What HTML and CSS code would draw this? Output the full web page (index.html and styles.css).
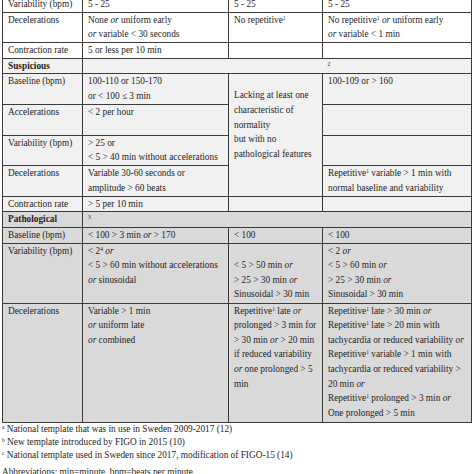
FILE: index.html
```html
<!DOCTYPE html>
<html>
<head>
<meta charset="utf-8">
<link rel="stylesheet" href="styles.css">
</head>
<body>
<div class="page">
<table class="grid">
<colgroup>
<col class="c1"><col class="c2"><col class="c3"><col class="c4">
</colgroup>
<tbody>
<tr class="normal l1">
<td>Variability (bpm)</td><td>5 - 25</td><td>5 - 25</td><td>5 - 25</td>
</tr>
<tr class="normal l2">
<td>Decelerations</td>
<td>None <i>or</i> uniform early<br><i>or</i> variable &lt; 30 seconds</td>
<td>No repetitive<sup>1</sup></td>
<td>No repetitive<sup>1</sup> <i>or</i> uniform early<br><i>or</i> variable &lt; 1 min</td>
</tr>
<tr class="normal l1">
<td>Contraction rate</td><td>5 or less per 10 min</td><td></td><td></td>
</tr>
<tr class="susp l1 head">
<td><b>Suspicious</b></td><td class="nr"></td><td class="nlr"></td><td class="nl"><sup>2</sup></td>
</tr>
<tr class="susp l2">
<td>Baseline (bpm)</td>
<td>100-110 or 150-170<br>or &lt; 100 ≤ 3 min</td>
<td rowspan="4" class="lack">Lacking at least one<br>characteristic of<br>normality<br>but with no<br>pathological features</td>
<td>100-109 or &gt; 160</td>
</tr>
<tr class="susp l2">
<td>Accelerations</td><td>&lt; 2 per hour</td><td></td>
</tr>
<tr class="susp l2">
<td>Variability (bpm)</td>
<td>&gt; 25 or<br>&lt; 5 &gt; 40 min without accelerations</td>
<td></td>
</tr>
<tr class="susp l2">
<td>Decelerations</td>
<td>Variable 30-60 seconds or<br>amplitude &gt; 60 beats</td>
<td>Repetitive<sup>1</sup> variable &gt; 1 min with<br>normal baseline and variability</td>
</tr>
<tr class="susp l1">
<td>Contraction rate</td><td>&gt; 5 per 10 min</td><td></td><td></td>
</tr>
<tr class="path l1 head">
<td><b>Pathological</b></td><td class="nr"><sup>3</sup></td><td class="nlr"></td><td class="nl"></td>
</tr>
<tr class="path l1">
<td>Baseline (bpm)</td><td>&lt; 100 &gt; 3 min <i>or</i> &gt; 170</td><td>&lt; 100</td><td>&lt; 100</td>
</tr>
<tr class="path l4">
<td>Variability (bpm)</td>
<td>&lt; 2<sup>4</sup> <i>or</i><br>&lt; 5 &gt; 60 min without accelerations<br><i>or</i> sinusoidal</td>
<td class="skip">&lt; 5 &gt; 50 min <i>or</i><br>&gt; 25 &gt; 30 min <i>or</i><br>Sinusoidal &gt; 30 min</td>
<td>&lt; 2 <i>or</i><br>&lt; 5 &gt; 60 min <i>or</i><br>&gt; 25 &gt; 30 min <i>or</i><br>Sinusoidal &gt; 30 min</td>
</tr>
<tr class="path l8">
<td>Decelerations</td>
<td>Variable &gt; 1 min<br><i>or</i> uniform late<br><i>or</i> combined</td>
<td>Repetitive<sup>1</sup> late <i>or</i><br>prolonged &gt; 3 min for<br>&gt; 30 min <i>or</i> &gt; 20 min<br>if reduced variability<br><i>or</i> one prolonged &gt; 5<br>min</td>
<td>Repetitive<sup>1</sup> late &gt; 30 min <i>or</i><br>Repetitive<sup>1</sup> late &gt; 20 min with<br>tachycardia or reduced variability <i>or</i><br>Repetitive<sup>1</sup> variable &gt; 1 min with<br>tachycardia or reduced variability &gt;<br>20 min <i>or</i><br>Repetitive<sup>1</sup> prolonged &gt; 3 min <i>or</i><br>One prolonged &gt; 5 min</td>
</tr>
</tbody>
</table>
<div class="notes">
<p><sup>a</sup> National template that was in use in Sweden 2009-2017 (12)</p>
<p><sup>b</sup> New template introduced by FIGO in 2015 (10)</p>
<p><sup>c</sup> National template used in Sweden since 2017, modification of FIGO-15 (14)</p>
<p class="abbr">Abbreviations: min=minute, bpm=beats per minute</p>
</div>
</div>
</body>
</html>
```
FILE: styles.css
```css
html, body {
  margin: 0;
  padding: 0;
  background: #ffffff;
}
body {
  width: 474px;
  height: 474px;
  overflow: hidden;
  font-family: "Liberation Serif", "Times New Roman", serif;
  font-size: 9.3px;
  color: #1e1e1e;
}
.page {
  margin-top: -4px;
  padding-left: 2px;
}
.grid {
  border-collapse: collapse;
  table-layout: fixed;
  width: 469px;
}
.c1 { width: 80px; }
.c2 { width: 146px; }
.c3 { width: 94px; }
.c4 { width: 149px; }
.grid td {
  border: 1px solid #3c3c3c;
  padding: 0 4px 0 5px;
  line-height: 14.6px;
  vertical-align: top;
  white-space: nowrap;
  overflow: hidden;
}
.l1 td { height: 14.6px; }
.l2 td { height: 29.6px; }
.l4 td { height: 59px; }
.l8 td { height: 118.5px; }
.grid td.lack {
  padding-top: 14px;
  height: auto;
}
.grid td.skip {
  padding-top: 14.6px;
  height: auto;
}
.grid td.nr { border-right: none; }
.grid td.nl { border-left: none; }
.grid td.nlr { border-left: none; border-right: none; }
.normal td { background: #ffffff; }
.susp td { background: #f1f1f1; }
.path td { background: #d9d9d9; }
.grid b { font-weight: bold; }
sup {
  font-size: 5.5px;
  line-height: 0;
  vertical-align: 3px;
}
.notes {
  padding-top: 0;
}
.notes p {
  margin: 0;
  line-height: 13.1px;
  white-space: nowrap;
}
.notes p.abbr {
  margin-top: 4px;
}
```
